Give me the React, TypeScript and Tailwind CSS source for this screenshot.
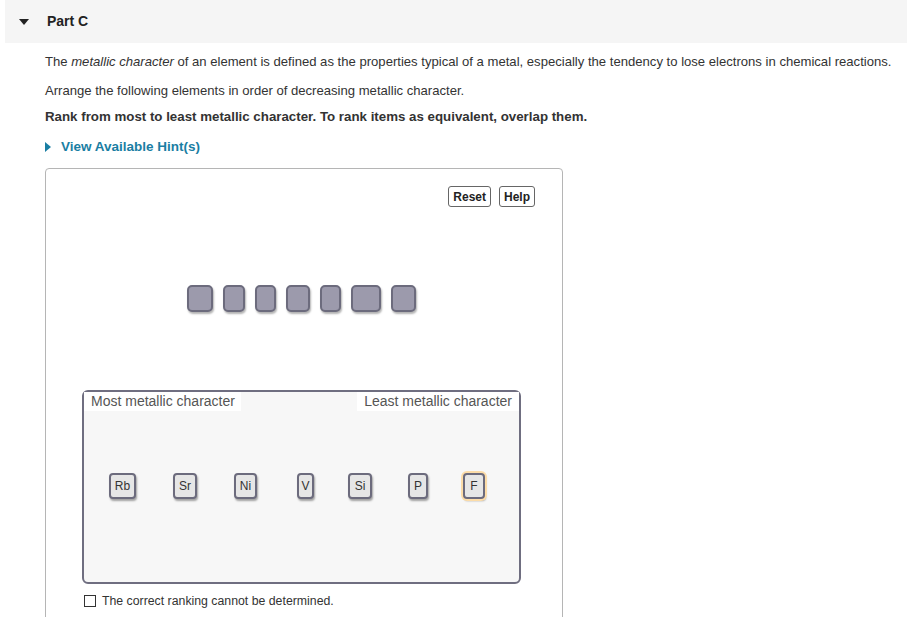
import React from 'react'

const slots = [
  'w-[26px]',
  'w-[22px]',
  'w-[21px]',
  'w-[24px]',
  'w-[21px]',
  'w-[30px]',
  'w-[25px]',
]

const elements = [
  { sym: 'Rb', cls: 'ml-[25px] w-[27px]' },
  { sym: 'Sr', cls: 'ml-[37px] w-[24px]' },
  { sym: 'Ni', cls: 'ml-[37px] w-[23px]' },
  { sym: 'V', cls: 'ml-[40px] w-[17px]' },
  { sym: 'Si', cls: 'ml-[34px] w-[24px]' },
  { sym: 'P', cls: 'ml-[36px] w-[20px]' },
  { sym: 'F', cls: 'ml-[35px] w-[22px] ring-2 ring-[#fcdca8]' },
]

export default function App() {
  return (
    <div className="h-[617px] w-full overflow-hidden bg-white font-['Liberation_Sans',Arial,sans-serif] text-[#333]">
      {/* part header */}
      <div className="ml-[5px] flex h-[43px] items-center bg-[#f5f5f5]">
        <svg className="ml-[14px]" width="10" height="6" viewBox="0 0 10 6">
          <path d="M0 0h10L5 6z" fill="#222" />
        </svg>
        <span className="ml-[18px] text-[14px] font-bold text-[#222]">Part C</span>
      </div>

      <div className="pl-[45px]">
        <p className="mt-[12px] text-[13.1px] leading-[14px]">
          The <i>metallic character</i> of an element is defined as the properties typical of a metal, especially the
          tendency to lose electrons in chemical reactions.
        </p>
        <p className="mt-[15px] text-[13.1px] leading-[14px]">
          Arrange the following elements in order of decreasing metallic character.
        </p>
        <p className="mt-[12px] text-[13.3px] font-bold leading-[14px]">
          Rank from most to least metallic character. To rank items as equivalent, overlap them.
        </p>
        <div className="mt-[15px] flex h-[16px] items-center text-[13.5px] font-bold text-[#1a7ea3]">
          <svg width="6" height="10" viewBox="0 0 6 10">
            <path d="M0 0l6 5-6 5z" fill="#1a7ea3" />
          </svg>
          <span className="ml-[10px]">View Available Hint(s)</span>
        </div>

        {/* sorting widget */}
        <div className="mt-[13px] h-[520px] w-[518px] rounded-t-[4px] border border-[#b5b5b5]">
          <div className="mr-[27px] mt-[17px] flex justify-end gap-[8px]">
            <button className="h-[21px] rounded-[3px] border border-[#666] bg-white px-[4px] text-[12px] font-bold text-[#222]">
              Reset
            </button>
            <button className="h-[21px] rounded-[3px] border border-[#666] bg-white px-[4px] text-[12px] font-bold text-[#222]">
              Help
            </button>
          </div>

          <div className="mt-[78px] flex gap-[10px] pl-[141px]">
            {slots.map((w, i) => (
              <div
                key={i}
                className={`h-[27px] ${w} rounded-[5px] border-2 border-[#6c6b7d] bg-[#9c9aac] shadow-[1px_2px_2px_rgba(0,0,0,0.3)]`}
              />
            ))}
          </div>

          <div className="ml-[36px] mt-[78px] h-[194px] w-[439px] rounded-[6px] border-2 border-[#6f6e80] bg-[#f7f7f7]">
            <div className="flex justify-between text-[14px] leading-[19px] text-[#555]">
              <span className="bg-white pl-[7px] pr-[6px]">Most metallic character</span>
              <span className="bg-white pl-[7px] pr-[7px]">Least metallic character</span>
            </div>
            <div className="mt-[62px] flex">
              {elements.map((el) => (
                <div
                  key={el.sym}
                  className={`flex h-[26px] items-center justify-center rounded-[4px] border-2 border-[#6c6b7d] bg-[#e6e6e6] text-[12px] text-[#333] shadow-[1px_2px_2px_rgba(0,0,0,0.35)] ${el.cls}`}
                >
                  {el.sym}
                </div>
              ))}
            </div>
          </div>

          <label className="ml-[38px] mt-[10px] flex items-center">
            <span className="h-[12px] w-[12px] border border-[#333] bg-white" />
            <span className="ml-[6px] text-[12.3px] leading-[14px]">The correct ranking cannot be determined.</span>
          </label>
        </div>
      </div>
    </div>
  )
}
